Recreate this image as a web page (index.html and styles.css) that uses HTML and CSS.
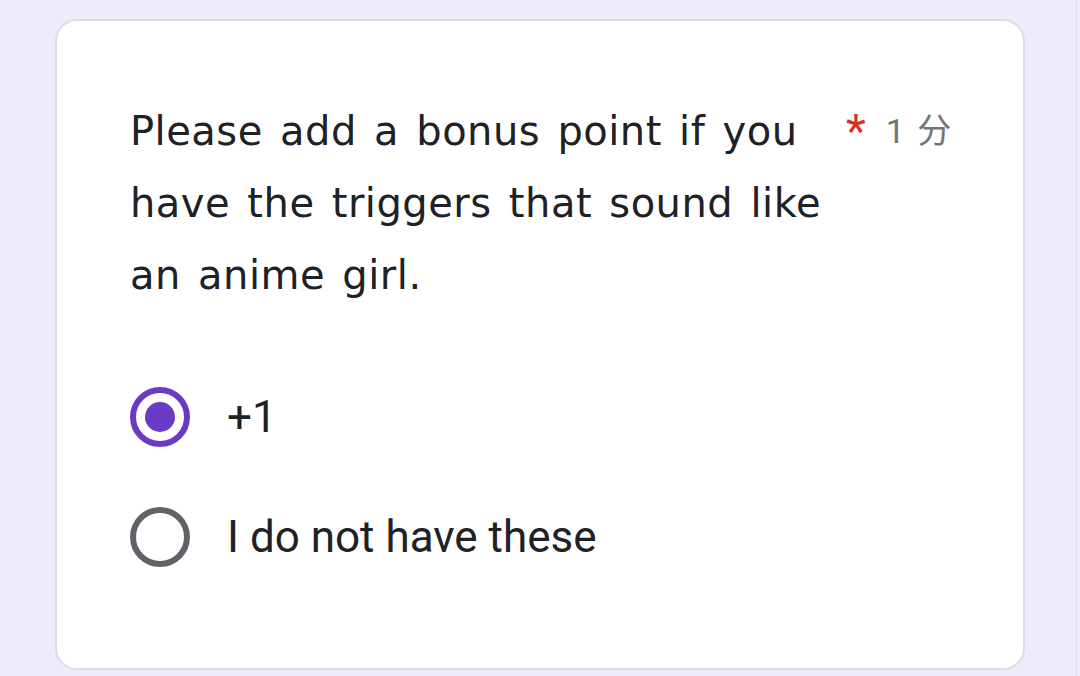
FILE: index.html
```html
<!DOCTYPE html>
<html lang="en">
<head>
<meta charset="utf-8">
<link rel="stylesheet" href="styles.css">
</head>
<body>
<div class="page">
  <div class="card">
    <div class="header">
      <div class="question">Please add a bonus point if you have the triggers that sound like an anime girl.</div>
      <div class="meta"><span class="req">*</span><span class="pts">1 分</span></div>
    </div>
    <div class="options">
      <div class="option">
        <span class="radio checked"><span class="dot"></span></span>
        <span class="label">+1</span>
      </div>
      <div class="option">
        <span class="radio"></span>
        <span class="label">I do not have these</span>
      </div>
    </div>
  </div>
</div>
</body>
</html>
```

FILE: styles.css
```css
html, body {
  margin: 0;
  padding: 0;
  background: #eeeafa;
}
.page {
  width: 1080px;
  height: 676px;
  box-sizing: border-box;
  padding: 19px 0 0 55px;
  box-shadow: inset -3px 0 0 #eeeafa, inset -4px 0 0 #dcd8ec;
  overflow: hidden;
}
.card {
  width: 970px;
  height: 651px;
  box-sizing: border-box;
  background: #ffffff;
  border: 2px solid #dcdbe3;
  border-radius: 22px;
  padding: 74px 0 0 73px;
}
.header {
  display: flex;
  align-items: flex-start;
}
.question {
  width: 700px;
  font-family: "DejaVu Sans", sans-serif;
  font-size: 40px;
  line-height: 72px;
  letter-spacing: 0.5px;
  word-spacing: 4px;
  color: #202124;
}
.meta {
  margin-left: 16px;
  padding-top: 11px;
  font-family: "Roboto", "Noto Sans CJK SC", sans-serif;
  white-space: nowrap;
  line-height: 50px;
}
.req {
  color: #d93025;
  font-size: 46px;
  margin-right: 20px;
}
.pts {
  color: #70757a;
  font-size: 34px;
  letter-spacing: 2px;
  vertical-align: 4px;
}
.options {
  display: flex;
  flex-direction: column;
  gap: 60px;
  margin-top: 76px;
}
.option {
  display: flex;
  align-items: center;
  gap: 37px;
}
.radio {
  width: 60px;
  height: 60px;
  box-sizing: border-box;
  border: 6px solid #5f6368;
  border-radius: 50%;
  display: flex;
  align-items: center;
  justify-content: center;
  flex: none;
}
.radio.checked {
  border-color: #6a3ac4;
}
.dot {
  width: 30px;
  height: 30px;
  border-radius: 50%;
  background: #6a3ac4;
}
.label {
  font-family: "Roboto", sans-serif;
  font-size: 44px;
  color: #202124;
}
```
